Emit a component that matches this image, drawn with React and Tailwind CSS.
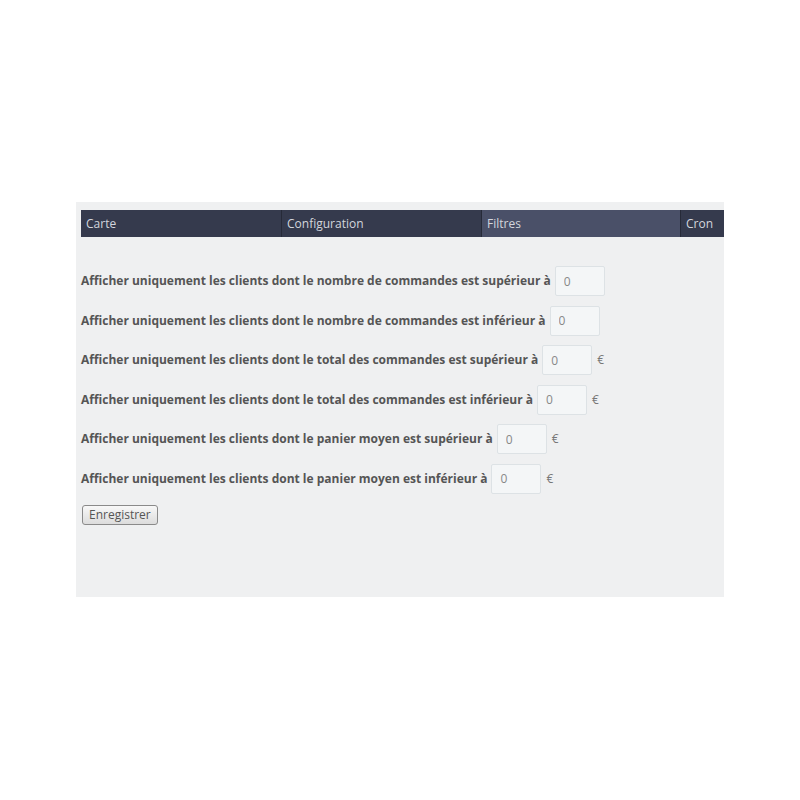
const rows = [
  { label: "Afficher uniquement les clients dont le nombre de commandes est supérieur à", euro: false },
  { label: "Afficher uniquement les clients dont le nombre de commandes est inférieur à", euro: false },
  { label: "Afficher uniquement les clients dont le total des commandes est supérieur à", euro: true },
  { label: "Afficher uniquement les clients dont le total des commandes est inférieur à", euro: true },
  { label: "Afficher uniquement les clients dont le panier moyen est supérieur à", euro: true },
  { label: "Afficher uniquement les clients dont le panier moyen est inférieur à", euro: true },
];

const tabs = [
  { name: "Carte", w: "w-[200px]", active: false },
  { name: "Configuration", w: "w-[200px]", active: false },
  { name: "Filtres", w: "w-[199px]", active: true },
  { name: "Cron", w: "flex-1", active: false },
];

const App = () => {
  return (
    <div className="w-[800px] h-[800px] bg-white pt-[202px] pl-[76px] font-['Open_Sans',sans-serif]">
      <div className="w-[648px] h-[395px] bg-[#eff0f1] pt-[8px] pl-[5px]">
        <div className="flex h-[27px] bg-[#353a4d]">
          {tabs.map((t, i) => (
            <div
              key={t.name}
              className={`${t.w} h-full flex items-center px-[5px] text-[12px] text-[#d3d6dd] ${
                i > 0 ? "border-l border-[#262a38]" : ""
              } ${t.active ? "bg-[#4a5068]" : ""}`}
            >
              {t.name}
            </div>
          ))}
        </div>

        <div className="pt-[29px] flex flex-col gap-[9.5px]">
          {rows.map((r) => (
            <div key={r.label} className="flex items-center h-[30px]">
              <label className="text-[12px] font-bold text-[#555] mr-[4px] whitespace-nowrap">{r.label}</label>
              <input
                type="text"
                defaultValue="0"
                className="w-[50px] h-[30px] bg-[#f4f6f7] border border-[#dde2e5] rounded-[2px] px-[8px] text-[12px] text-[#888] outline-none"
              />
              {r.euro && <span className="ml-[5px] text-[12px] text-[#777]">€</span>}
            </div>
          ))}
        </div>

        <button className="mt-[11px] ml-[1px] h-[20px] px-[6px] text-[12px] text-[#555] border border-[#8a8a8a] rounded-[3px] bg-gradient-to-b from-[#f8f8f8] to-[#dcdcdc] leading-none">
          Enregistrer
        </button>
      </div>
    </div>
  );
};

export default App;
